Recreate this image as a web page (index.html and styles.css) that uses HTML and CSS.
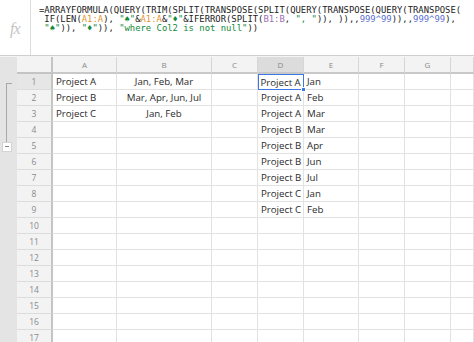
FILE: index.html
```html
<!DOCTYPE html>
<html>
<head>
<meta charset="utf-8">
<link rel="stylesheet" href="styles.css">
</head>
<body>
<div class="app">
  <div class="fbar">
    <div class="fx">fx</div>
    <div class="formula">
      <div class="fline">=ARRAYFORMULA(QUERY(TRIM(SPLIT(TRANSPOSE(SPLIT(QUERY(TRANSPOSE(QUERY(TRANSPOSE(</div>
      <div class="fline"> IF(LEN(<span class="ref-a">A1:A</span>), <span class="str">"♠"</span>&amp;<span class="ref-a">A1:A</span>&amp;<span class="str">"♦"</span>&amp;IFERROR(SPLIT(<span class="ref-b">B1:B</span>, <span class="str">", "</span>)), )),,<span class="num">999^99</span>)),,<span class="num">999^99</span>),</div>
      <div class="fline"> <span class="str">"♠"</span>)), <span class="str">"♦"</span>)), <span class="str">"where Col2 is not null"</span>))</div>
    </div>
  </div>
  <div class="gap"></div>
  <div class="sheet">
    <div class="groups">
      <div class="bracket"></div>
      <div class="minus"></div>
    </div>
    <div class="grid">
      <div class="corner"></div>
      <div class="ch">A</div>
      <div class="ch">B</div>
      <div class="ch">C</div>
      <div class="ch ch-sel">D</div>
      <div class="ch">E</div>
      <div class="ch">F</div>
      <div class="ch">G</div>
      <div class="ch"></div>

      <div class="rh rh-sel">1</div>
      <div class="c">Project A</div>
      <div class="c center">Jan, Feb, Mar</div>
      <div class="c"></div>
      <div class="c sel">Project A<span class="handle"></span></div>
      <div class="c">Jan</div>
      <div class="c"></div><div class="c"></div><div class="c"></div>

      <div class="rh">2</div>
      <div class="c">Project B</div>
      <div class="c center">Mar, Apr, Jun, Jul</div>
      <div class="c"></div>
      <div class="c">Project A</div>
      <div class="c">Feb</div>
      <div class="c"></div><div class="c"></div><div class="c"></div>

      <div class="rh">3</div>
      <div class="c">Project C</div>
      <div class="c center">Jan, Feb</div>
      <div class="c"></div>
      <div class="c">Project A</div>
      <div class="c">Mar</div>
      <div class="c"></div><div class="c"></div><div class="c"></div>

      <div class="rh">4</div>
      <div class="c"></div><div class="c"></div><div class="c"></div>
      <div class="c">Project B</div>
      <div class="c">Mar</div>
      <div class="c"></div><div class="c"></div><div class="c"></div>

      <div class="rh">5</div>
      <div class="c"></div><div class="c"></div><div class="c"></div>
      <div class="c">Project B</div>
      <div class="c">Apr</div>
      <div class="c"></div><div class="c"></div><div class="c"></div>

      <div class="rh">6</div>
      <div class="c"></div><div class="c"></div><div class="c"></div>
      <div class="c">Project B</div>
      <div class="c">Jun</div>
      <div class="c"></div><div class="c"></div><div class="c"></div>

      <div class="rh">7</div>
      <div class="c"></div><div class="c"></div><div class="c"></div>
      <div class="c">Project B</div>
      <div class="c">Jul</div>
      <div class="c"></div><div class="c"></div><div class="c"></div>

      <div class="rh">8</div>
      <div class="c"></div><div class="c"></div><div class="c"></div>
      <div class="c">Project C</div>
      <div class="c">Jan</div>
      <div class="c"></div><div class="c"></div><div class="c"></div>

      <div class="rh">9</div>
      <div class="c"></div><div class="c"></div><div class="c"></div>
      <div class="c">Project C</div>
      <div class="c">Feb</div>
      <div class="c"></div><div class="c"></div><div class="c"></div>

      <div class="rh">10</div>
      <div class="c"></div><div class="c"></div><div class="c"></div><div class="c"></div><div class="c"></div><div class="c"></div><div class="c"></div><div class="c"></div>
      <div class="rh">11</div>
      <div class="c"></div><div class="c"></div><div class="c"></div><div class="c"></div><div class="c"></div><div class="c"></div><div class="c"></div><div class="c"></div>
      <div class="rh">12</div>
      <div class="c"></div><div class="c"></div><div class="c"></div><div class="c"></div><div class="c"></div><div class="c"></div><div class="c"></div><div class="c"></div>
      <div class="rh">13</div>
      <div class="c"></div><div class="c"></div><div class="c"></div><div class="c"></div><div class="c"></div><div class="c"></div><div class="c"></div><div class="c"></div>
      <div class="rh">14</div>
      <div class="c"></div><div class="c"></div><div class="c"></div><div class="c"></div><div class="c"></div><div class="c"></div><div class="c"></div><div class="c"></div>
      <div class="rh">15</div>
      <div class="c"></div><div class="c"></div><div class="c"></div><div class="c"></div><div class="c"></div><div class="c"></div><div class="c"></div><div class="c"></div>
      <div class="rh">16</div>
      <div class="c"></div><div class="c"></div><div class="c"></div><div class="c"></div><div class="c"></div><div class="c"></div><div class="c"></div><div class="c"></div>
      <div class="rh">17</div>
      <div class="c"></div><div class="c"></div><div class="c"></div><div class="c"></div><div class="c"></div><div class="c"></div><div class="c"></div><div class="c"></div>
    </div>
  </div>
</div>
</body>
</html>
```

FILE: styles.css
```css
html, body {
  margin: 0;
  padding: 0;
  background: #ffffff;
}
.app {
  width: 474px;
  height: 342px;
  overflow: hidden;
  display: flex;
  flex-direction: column;
  font-family: "Open Sans", "Liberation Sans", sans-serif;
}
.fbar {
  height: 56px;
  flex: none;
  box-sizing: border-box;
  border-bottom: 1px solid #cfcfcf;
  display: flex;
  overflow: hidden;
}
.fx {
  width: 31px;
  flex: none;
  box-sizing: border-box;
  border-right: 1px solid #dcdcdc;
  color: #c4c4c4;
  font-family: "Liberation Serif", serif;
  font-style: italic;
  font-size: 16px;
  padding-top: 20px;
  padding-left: 10px;
  letter-spacing: -1px;
}
.formula {
  padding: 6px 0 0 8px;
  font-family: "DejaVu Sans Mono", "Liberation Mono", monospace;
  font-size: 8.9px;
  line-height: 8.8px;
  color: #222222;
}
.fline {
  height: 8.8px;
  white-space: pre;
}
.ref-a { color: #e8922e; }
.ref-b { color: #9b6fb8; }
.num { color: #5b6fcf; }
.str { color: #138a3a; }
.gap {
  height: 1px;
  flex: none;
  background: #f4f4f4;
}
.sheet {
  flex: 1;
  display: flex;
}
.groups {
  width: 17px;
  flex: none;
  background: #e4e4e4;
  position: relative;
}
.bracket {
  position: absolute;
  left: 6px;
  top: 26px;
  width: 6px;
  height: 59px;
  box-sizing: border-box;
  border-left: 1px solid #a8a8a8;
  border-top: 1px solid #a8a8a8;
}
.minus {
  position: absolute;
  left: 2px;
  top: 85px;
  width: 10px;
  height: 10px;
  box-sizing: border-box;
  background: #ffffff;
  border: 1px solid #d4d4d4;
}
.minus::after {
  content: "";
  position: absolute;
  left: 2px;
  top: 3px;
  width: 4px;
  height: 1px;
  background: #888888;
}
.grid {
  flex: 1;
  display: grid;
  grid-template-columns: 36px 64px 95px 46px 46px 55px 46px 46px 1fr;
  grid-template-rows: 17px repeat(17, 16px);
  align-content: start;
}
.corner, .ch, .rh, .c {
  box-sizing: border-box;
  border-right: 1px solid #e2e2e2;
  border-bottom: 1px solid #e2e2e2;
}
.corner {
  background: #f3f3f3;
  border-right: 2px solid #c4c4c4;
  border-bottom: 2px solid #c4c4c4;
}
.ch {
  background: #f3f3f3;
  border-bottom: 2px solid #c8c8c8;
  border-right-color: #d6d6d6;
  color: #8a8a8a;
  font-size: 8px;
  display: flex;
  align-items: center;
  justify-content: center;
}
.ch-sel {
  background: #dcdcdc;
}
.rh {
  background: #f3f3f3;
  border-right: 2px solid #c4c4c4;
  border-bottom-color: #dcdcdc;
  color: #8a8a8a;
  font-size: 8.5px;
  display: flex;
  align-items: center;
  justify-content: center;
}
.rh-sel {
  background: #e6e6e6;
}
.c {
  font-size: 9.7px;
  color: #2a2a2a;
  padding-left: 3px;
  display: flex;
  align-items: center;
  white-space: nowrap;
  overflow: visible;
}
.center {
  justify-content: center;
  padding-left: 0;
}
.sel {
  position: relative;
  border: 1.5px solid #3b78e7;
  padding-left: 1.5px;
}
.handle {
  position: absolute;
  right: -3px;
  bottom: -3px;
  width: 5px;
  height: 5px;
  background: #3b78e7;
  border: 1px solid #ffffff;
  box-sizing: border-box;
  z-index: 2;
}
```
